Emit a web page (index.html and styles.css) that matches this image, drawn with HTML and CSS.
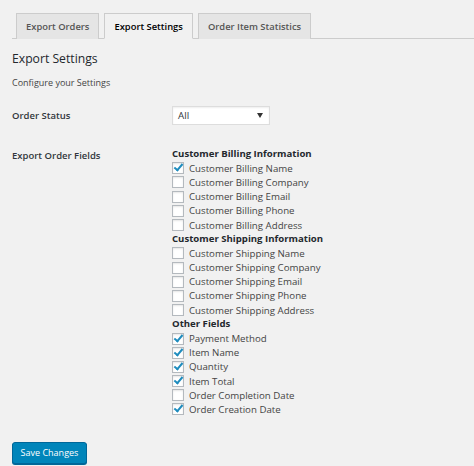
FILE: index.html
```html
<!DOCTYPE html>
<html lang="en">
<head>
<meta charset="utf-8">
<title>Export Settings</title>
<link rel="stylesheet" href="styles.css">
</head>
<body>
<div class="wrap">
  <nav class="tabs">
    <a class="tab">Export Orders</a>
    <a class="tab active">Export Settings</a>
    <a class="tab">Order Item Statistics</a>
  </nav>
  <h2 class="title">Export Settings</h2>
  <p class="desc">Configure your Settings</p>
  <div class="form">
    <div class="row status-row">
      <div class="label">Order Status</div>
      <div class="field">
        <div class="select"><span>All</span><span class="arrow"></span></div>
      </div>
    </div>
    <div class="row fields-row">
      <div class="label">Export Order Fields</div>
      <div class="field list">
        <div class="group">Customer Billing Information</div>
        <label class="item"><span class="cb checked"></span>Customer Billing Name</label>
        <label class="item"><span class="cb"></span>Customer Billing Company</label>
        <label class="item"><span class="cb"></span>Customer Billing Email</label>
        <label class="item"><span class="cb"></span>Customer Billing Phone</label>
        <label class="item"><span class="cb"></span>Customer Billing Address</label>
        <div class="group">Customer Shipping Information</div>
        <label class="item"><span class="cb"></span>Customer Shipping Name</label>
        <label class="item"><span class="cb"></span>Customer Shipping Company</label>
        <label class="item"><span class="cb"></span>Customer Shipping Email</label>
        <label class="item"><span class="cb"></span>Customer Shipping Phone</label>
        <label class="item"><span class="cb"></span>Customer Shipping Address</label>
        <div class="group">Other Fields</div>
        <label class="item"><span class="cb checked"></span>Payment Method</label>
        <label class="item"><span class="cb checked"></span>Item Name</label>
        <label class="item"><span class="cb checked"></span>Quantity</label>
        <label class="item"><span class="cb checked"></span>Item Total</label>
        <label class="item"><span class="cb"></span>Order Completion Date</label>
        <label class="item"><span class="cb checked"></span>Order Creation Date</label>
      </div>
    </div>
  </div>
  <button class="save">Save Changes</button>
</div>
</body>
</html>
```
FILE: styles.css
```css
html, body {
  margin: 0;
  padding: 0;
  background: #f1f1f1;
}
body {
  font-family: "Open Sans", "Noto Sans", sans-serif;
  font-size: 10px;
  color: #23282d;
  height: 466px;
  overflow: hidden;
}
.wrap {
  padding: 13px 0 0 12px;
}
.tabs {
  display: flex;
  border-bottom: 1px solid #ccc;
  padding-left: 4px;
  height: 25px;
}
.tab {
  box-sizing: border-box;
  height: 26px;
  margin-right: 5px;
  padding: 0 9px;
  display: flex;
  align-items: center;
  background: #e5e5e5;
  border: 1px solid #ccc;
  border-bottom: none;
  color: #555;
  font-size: 9.4px;
  font-weight: 600;
}
.tab.active {
  background: #f1f1f1;
  border-bottom: 1px solid #f1f1f1;
  color: #000;
}
.title {
  margin: 11px 0 0;
  font-size: 12.2px;
  font-weight: 400;
  line-height: 18px;
  color: #23282d;
}
.desc {
  margin: 8px 0 0;
  font-size: 9px;
  line-height: 14px;
  color: #444;
}
.form {
  margin-top: 16px;
}
.row {
  display: flex;
}
.label {
  width: 160px;
  flex: none;
  font-size: 9.5px;
  font-weight: 600;
  color: #32373c;
}
.status-row .label {
  padding-top: 3px;
}
.select {
  box-sizing: border-box;
  width: 98px;
  height: 19px;
  background: #fff;
  border: 1px solid #ddd;
  display: flex;
  align-items: center;
  justify-content: space-between;
  padding: 0 6px 0 5px;
  font-size: 9.8px;
  color: #32373c;
  box-shadow: inset 0 1px 2px rgba(0,0,0,.07);
}
.arrow {
  width: 0;
  height: 0;
  border-left: 3px solid transparent;
  border-right: 3px solid transparent;
  border-top: 5px solid #333;
}
.fields-row {
  margin-top: 22px;
}
.fields-row .label {
  padding-top: 2px;
}
.list {
  display: flex;
  flex-direction: column;
}
.group {
  font-weight: 700;
  font-size: 9.6px;
  line-height: 14.2px;
  height: 14.2px;
  color: #23282d;
}
.item {
  display: flex;
  align-items: center;
  height: 14.2px;
  font-size: 9.7px;
  color: #444;
}
.cb {
  box-sizing: border-box;
  width: 12px;
  height: 12px;
  margin-right: 5px;
  background: #fff;
  border: 1px solid #b4b9be;
  box-shadow: inset 0 1px 2px rgba(0,0,0,.1);
  position: relative;
}
.cb.checked::after {
  content: "";
  position: absolute;
  left: 3px;
  top: -1px;
  width: 3px;
  height: 7px;
  border-right: 2px solid #1e8cbe;
  border-bottom: 2px solid #1e8cbe;
  transform: rotate(40deg);
}
.save {
  display: block;
  margin-top: 25px;
  box-sizing: border-box;
  height: 22px;
  width: 75px;
  padding: 0;
  background: #0085ba;
  border: 1px solid #006799;
  border-radius: 3px;
  box-shadow: 0 1px 0 #006799;
  color: #fff;
  font-family: "Open Sans", "Noto Sans", sans-serif;
  font-size: 9px;
}
```
